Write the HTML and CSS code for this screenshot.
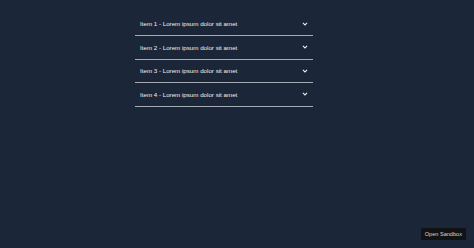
FILE: index.html
```html
<!DOCTYPE html>
<html>
<head>
<meta charset="utf-8">
<link rel="stylesheet" href="styles.css">
</head>
<body>
<div class="page">
  <ul class="accordion">
    <li class="item"><span class="label">Item 1 - Lorem ipsum dolor sit amet</span><svg class="chev" viewBox="0 0 10 6"><path d="M1.5 1.2 L5 4.6 L8.5 1.2" fill="none" stroke="currentColor" stroke-width="1.8"/></svg></li>
    <li class="item"><span class="label">Item 2 - Lorem ipsum dolor sit amet</span><svg class="chev" viewBox="0 0 10 6"><path d="M1.5 1.2 L5 4.6 L8.5 1.2" fill="none" stroke="currentColor" stroke-width="1.8"/></svg></li>
    <li class="item"><span class="label">Item 3 - Lorem ipsum dolor sit amet</span><svg class="chev" viewBox="0 0 10 6"><path d="M1.5 1.2 L5 4.6 L8.5 1.2" fill="none" stroke="currentColor" stroke-width="1.8"/></svg></li>
    <li class="item"><span class="label">Item 4 - Lorem ipsum dolor sit amet</span><svg class="chev" viewBox="0 0 10 6"><path d="M1.5 1.2 L5 4.6 L8.5 1.2" fill="none" stroke="currentColor" stroke-width="1.8"/></svg></li>
  </ul>
</div>
<a class="sandbox">Open Sandbox</a>
</body>
</html>
```
FILE: styles.css
```css
html, body {
  margin: 0;
  height: 100%;
  background: #1b2739;
  font-family: "Liberation Sans", Arial, sans-serif;
}
.page {
  padding: 12.5px 0 0 135px;
}
.accordion {
  list-style: none;
  margin: 0;
  padding: 0;
  width: 178px;
}
.item {
  display: flex;
  align-items: center;
  justify-content: space-between;
  height: 22.5px;
  padding: 0 5px 0 5px;
  border-bottom: 1px solid #a3abb5;
  color: #eef0f3;
  font-size: 6.2px;
}
.chev {
  width: 6px;
  height: 4px;
  margin-top: 0;
  color: #e8ebef;
}
.sandbox {
  position: fixed;
  right: 8px;
  bottom: 8px;
  background: #101214;
  color: #d8d8d8;
  font-size: 5.6px;
  padding: 3px 4px;
  border-radius: 1.5px;
}
```
